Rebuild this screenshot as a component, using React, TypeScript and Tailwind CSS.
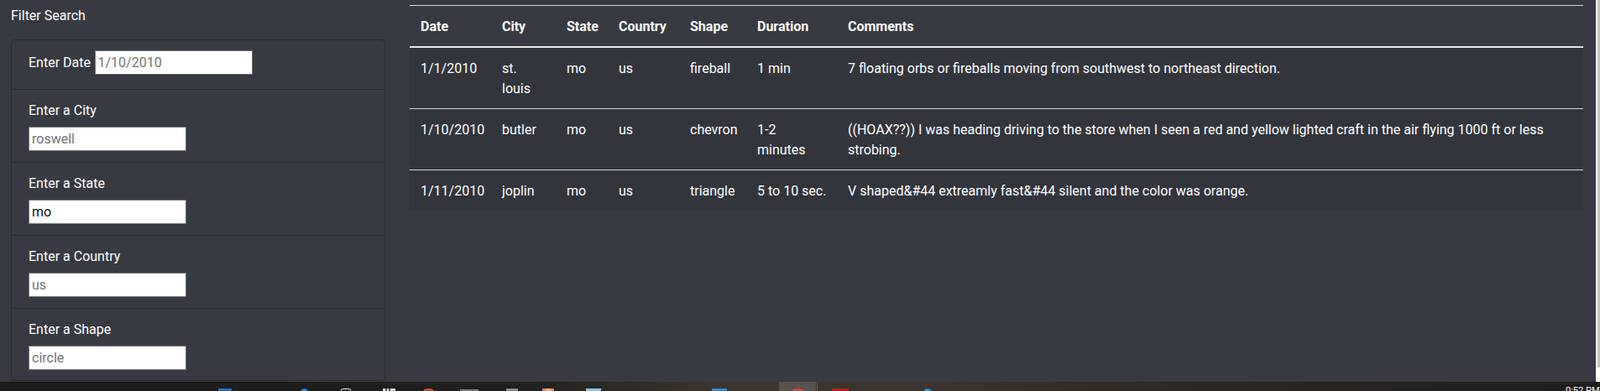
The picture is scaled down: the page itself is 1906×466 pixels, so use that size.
import React from "react";

const font = { fontFamily: "Roboto, 'Liberation Sans', sans-serif" };

function FieldItem({
  label,
  placeholder,
  value,
  pb,
}: {
  label: string;
  placeholder?: string;
  value?: string;
  pb: string;
}) {
  return (
    <div className={`border-t border-[#2a2d33] px-5 pt-[13px] ${pb}`}>
      <div className="h-6 text-[16px] leading-6 text-white">{label}</div>
      <input
        readOnly
        value={value ?? ""}
        placeholder={placeholder}
        className="mt-[7px] block h-[29px] w-[188px] border border-[#767676] bg-white px-[3px] text-[16px] text-[#111] placeholder:text-[#757575] outline-none"
        style={font}
      />
    </div>
  );
}

const rows = [
  {
    date: "1/1/2010",
    city: ["st.", "louis"],
    state: "mo",
    country: "us",
    shape: "fireball",
    duration: ["1 min"],
    comments: ["7 floating orbs or fireballs moving from southwest to northeast direction."],
  },
  {
    date: "1/10/2010",
    city: ["butler"],
    state: "mo",
    country: "us",
    shape: "chevron",
    duration: ["1-2", "minutes"],
    comments: [
      "((HOAX??)) I was heading driving to the store when I seen a red and yellow lighted craft in the air flying 1000 ft or less",
      "strobing.",
    ],
  },
  {
    date: "1/11/2010",
    city: ["joplin"],
    state: "mo",
    country: "us",
    shape: "triangle",
    duration: ["5 to 10 sec."],
    comments: ["V shaped&#44 extreamly fast&#44 silent and the color was orange."],
  },
];

function Lines({ parts }: { parts: string[] }) {
  return (
    <>
      {parts.map((p, i) => (
        <div key={i} className="whitespace-nowrap">
          {p}
        </div>
      ))}
    </>
  );
}

export default function App() {
  return (
    <div className="flex h-[466px] w-[1906px] flex-col overflow-hidden bg-[#373a42] text-white" style={font}>
      <div className="flex h-[455px] overflow-hidden">
        {/* left column */}
        <div className="w-[475px] shrink-0 pl-[13px]">
          <div className="pt-[7px] text-[16px] leading-6 text-white">Filter Search</div>
          <div className="mt-[16px] w-[446px] overflow-hidden rounded-[4px] border border-[#2a2d33]">
            <div className="flex items-center px-5 pt-[12px] pb-[18px]">
              <label className="w-[78.5px] shrink-0 text-[16px] leading-6 text-white">Enter Date</label>
              <input
                readOnly
                placeholder="1/10/2010"
                className="block h-[29px] w-[188px] border border-[#767676] bg-white px-[3px] text-[16px] text-[#111] placeholder:text-[#757575] outline-none"
                style={font}
              />
            </div>
            <div className="-mt-px">
              <FieldItem label="Enter a City" placeholder="roswell" pb="pb-[13px]" />
            </div>
            <FieldItem label="Enter a State" value="mo" pb="pb-[13px]" />
            <FieldItem label="Enter a Country" placeholder="us" pb="pb-[13px]" />
            <FieldItem label="Enter a Shape" placeholder="circle" pb="pb-[12px]" />
          </div>
        </div>

        {/* right column */}
        <div className="min-w-0 flex-1 pl-[13px] pr-[15px] pt-[6px]">
          <table className="w-full table-fixed border-separate border-spacing-0 text-[16px] leading-6 text-white">
            <colgroup>
              <col className="w-[97px]" />
              <col className="w-[77px]" />
              <col className="w-[62px]" />
              <col className="w-[85px]" />
              <col className="w-[80px]" />
              <col className="w-[108px]" />
              <col />
            </colgroup>
            <thead>
              <tr>
                {["Date", "City", "State", "Country", "Shape", "Duration", "Comments"].map((h) => (
                  <th
                    key={h}
                    className="border-t border-b-2 border-t-[#d6d8db] border-b-[#e3e5e8] px-[13px] pt-[13px] pb-[11px] text-left align-top font-bold whitespace-nowrap"
                  >
                    {h}
                  </th>
                ))}
              </tr>
            </thead>
            <tbody>
              {rows.map((r, i) => {
                const cls =
                  "bg-[#32353c] px-[13px] pt-[13px] align-top " +
                  (i === 0 ? "" : "border-t border-[#d6d8db] ") +
                  (i === rows.length - 1 ? "pb-[10px]" : "pb-[11px]");
                return (
                  <tr key={i}>
                    <td className={cls}>{r.date}</td>
                    <td className={cls}>
                      <Lines parts={r.city} />
                    </td>
                    <td className={cls}>{r.state}</td>
                    <td className={cls}>{r.country}</td>
                    <td className={cls}>{r.shape}</td>
                    <td className={cls}>
                      <Lines parts={r.duration} />
                    </td>
                    <td className={cls}>
                      <Lines parts={r.comments} />
                    </td>
                  </tr>
                );
              })}
            </tbody>
          </table>
        </div>

        {/* scrollbar */}
        <div className="flex w-[5px] shrink-0 bg-white">
          <div className="ml-[2px] h-[438px] w-[3px] bg-[#c5c5c5]" />
        </div>
      </div>

      {/* taskbar */}
      <div className="flex h-[11px] items-start overflow-hidden bg-[linear-gradient(90deg,#1c1c1c_0%,#1f1f1f_32%,#3c342e_45%,#3b332d_58%,#2b2623_76%,#1e1e1e_100%)]">
        <div className="ml-[260px] mt-[8px] h-[6px] w-[16px] bg-[#1b6fc6]" />
        <div className="ml-[82px] mt-[8px] h-[6px] w-[9px] rounded-t-full bg-[#1e86e0]" />
        <div className="ml-[39px] mt-[8px] h-[6px] w-[12px] rounded-t-[2px] border border-[#e6e6e6] bg-[#2a2a2a]" />
        <div className="ml-[38px] mt-[8px] flex h-[6px] w-[15px] gap-[2px] bg-[#d5d5d5] px-[3px]">
          <div className="w-[2px] bg-[#555]" />
          <div className="w-[2px] bg-[#555]" />
        </div>
        <div className="ml-[32px] mt-[8px] h-[6px] w-[15px] rounded-t-full bg-[#d8463b]" />
        <div className="ml-[30px] mt-[9px] h-[6px] w-[22px] bg-[#7c7c7c]" />
        <div className="ml-[33px] mt-[8px] h-[6px] w-[14px] bg-[#8a8a8a]" />
        <div className="ml-[29px] mt-[8px] h-[6px] w-[14px] bg-[linear-gradient(90deg,#e56a9c,#f0c040,#e56a9c)]" />
        <div className="ml-[38px] mt-[8px] h-[6px] w-[18px] bg-[#8cc6e6]" />
        <div className="ml-[132px] mt-[8px] h-[6px] w-[18px] bg-[#2d8ce0]" />
        <div className="ml-[62px] flex h-full w-[44px] justify-center bg-[#5a524c]">
          <div className="mt-[8px] h-[6px] w-[15px] rounded-t-full bg-[#d6443a]" />
        </div>
        <div className="ml-[1px] h-full w-[1px] bg-[#5e5853]" />
        <div className="ml-[17px] mt-[8px] h-[6px] w-[20px] bg-[#c21a1a]" />
        <div className="ml-[89px] mt-[8px] h-[6px] w-[10px] rounded-t-full bg-[#1f8fe0]" />
        <div className="ml-[755px] mt-[5px] whitespace-nowrap text-[11px] leading-none text-white">0:52 PM</div>
      </div>
    </div>
  );
}
